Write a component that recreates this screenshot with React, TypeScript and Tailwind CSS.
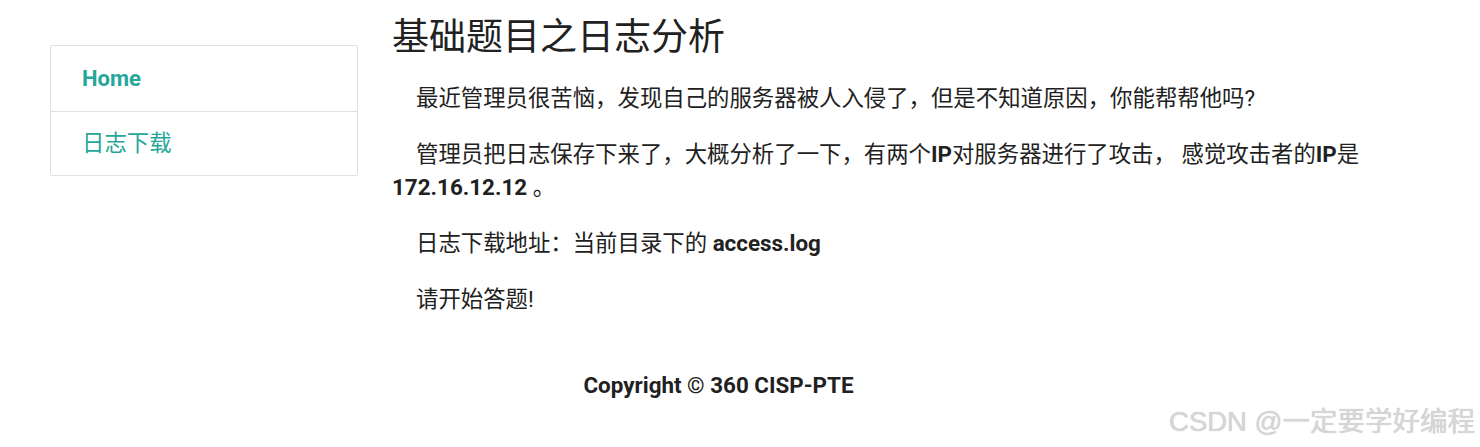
import React from 'react'

const cjk = "font-['Roboto','Noto_Sans_CJK_SC',sans-serif]"

function SideNav() {
  return (
    <div className="w-[308px] shrink-0 mt-[45px] self-start border border-[#e0e0e0] rounded-[2px] bg-white">
      <a className="block px-[31px] py-[16px] leading-[33px] text-[22px] font-bold text-[#26a69a] border-b border-[#e0e0e0]">
        Home
      </a>
      <a className="block px-[31px] py-[15px] leading-[33px] text-[22.4px] text-[#26a69a]">
        日志下载
      </a>
    </div>
  )
}

function Content() {
  return (
    <div className="flex-1 text-[#212121]">
      <h4 className="mt-[18px] mb-[23px] text-[37px] leading-[1.1] font-normal">基础题目之日志分析</h4>
      <p className="mb-[23px] text-[22.4px] leading-[33px] indent-[24px]">
        最近管理员很苦恼，发现自己的服务器被人入侵了，但是不知道原因，你能帮帮他吗?
      </p>
      <p className="mb-[23px] text-[22.4px] leading-[33px] indent-[24px]">
        管理员把日志保存下来了，大概分析了一下，有两个<b>IP</b>对服务器进行了攻击， 感觉攻击者的<b>IP</b>是<b>172.16.12.12</b> 。
      </p>
      <p className="mb-[23px] text-[22.4px] leading-[33px] indent-[24px]">
        日志下载地址：当前目录下的 <b>access.log</b>
      </p>
      <p className="text-[22.4px] leading-[33px] indent-[24px]">请开始答题!</p>
    </div>
  )
}

export default function App() {
  return (
    <div className={`relative w-[1480px] h-[447px] bg-white overflow-hidden ${cjk}`}>
      <div className="flex gap-[34px] pl-[50px] pr-[50px]">
        <SideNav />
        <Content />
      </div>
      <footer className="mt-[53px] pr-[43px] text-center text-[22.4px] leading-[33px] font-bold text-[#212121]">
        Copyright © 360 CISP-PTE
      </footer>
      <div className="absolute right-[5px] top-[408px] text-[27.5px] leading-none text-[#d6d6d6] font-['Liberation_Sans','Noto_Sans_CJK_SC',sans-serif] [text-shadow:0_0_1px_#c0c0c0]">
        CSDN @一定要学好编程
      </div>
    </div>
  )
}
